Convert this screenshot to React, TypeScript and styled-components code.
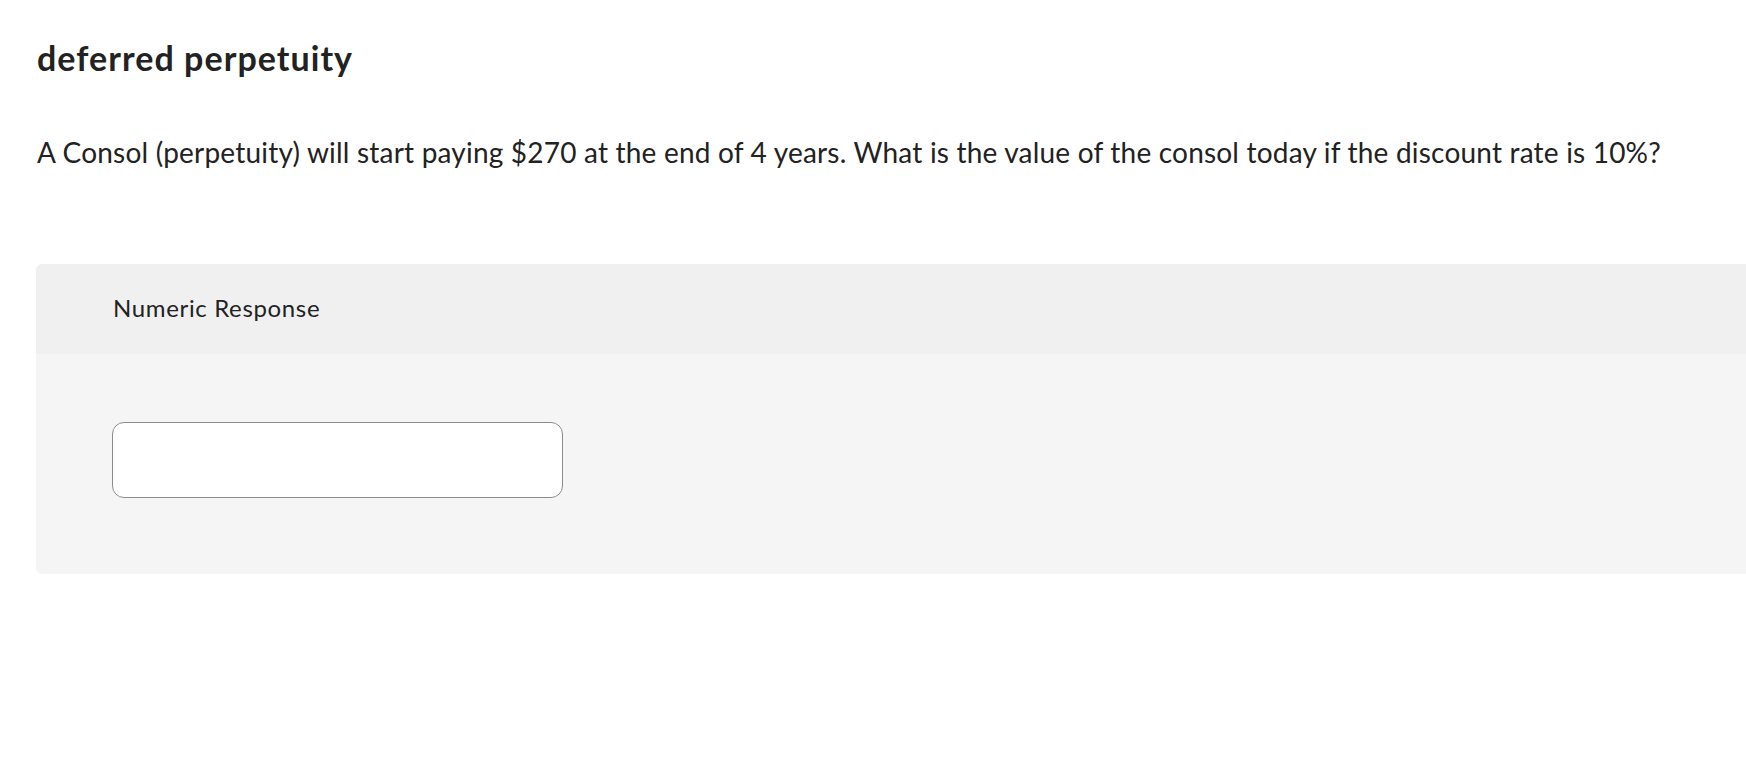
import styled, { createGlobalStyle } from "styled-components";

const GlobalStyle = createGlobalStyle`
  body {
    margin: 0;
    background: #ffffff;
    color: #222222;
    font-family: "Lato", "Liberation Sans", sans-serif;
    overflow-x: hidden;
  }
`;

const App = () => {
  return (
    <>
      <GlobalStyle />
      <MainContainer>
        <h1>deferred perpetuity</h1>
        <p className="question">
          A Consol (perpetuity) will start paying $270 at the end of 4 years. What is the value of the
          consol today if the discount rate is 10%?
        </p>
        <ResponsePanel>
          <div className="header">Numeric Response</div>
          <div className="body">
            <AnswerInput type="text" aria-label="Numeric Response" />
          </div>
        </ResponsePanel>
      </MainContainer>
    </>
  );
};

const MainContainer = styled.div`
  padding: 38px 0 0 36px;

  h1 {
    margin: 0 0 56px 1px;
    font-size: 34px;
    line-height: 40px;
    font-weight: 700;
    letter-spacing: 1.05px;
  }

  .question {
    margin: 0 0 94px 1px;
    font-size: 28px;
    line-height: 36px;
    letter-spacing: 0.2px;
    white-space: nowrap;
  }
`;

const ResponsePanel = styled.div`
  width: calc(100vw - 20px);
  border-radius: 6px;
  overflow: hidden;

  .header {
    background: #f0f0f0;
    padding: 29px 0 31px 77px;
    font-size: 24px;
    line-height: 30px;
    letter-spacing: 0.65px;
  }

  .body {
    background: #f5f5f5;
    padding: 68px 76px 76px;
  }
`;

const AnswerInput = styled.input`
  display: block;
  box-sizing: border-box;
  width: 451px;
  height: 76px;
  margin: 0;
  padding: 0 16px;
  border: 1px solid #8c8c8c;
  border-radius: 12px;
  background: #ffffff;
  font-family: inherit;
  font-size: 24px;
  color: #222222;
  outline: none;
`;

export default App;
